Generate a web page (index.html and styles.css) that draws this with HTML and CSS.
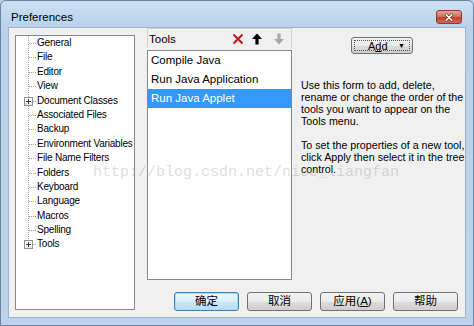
FILE: index.html
```html
<!DOCTYPE html>
<html lang="en">
<head>
  <meta charset="UTF-8">
  <title>Preferences</title>
  <link rel="stylesheet" href="styles.css">
</head>
<body>
  <div class="window">
    <div class="titlebar">
      <span class="title">Preferences</span>
      <span class="close">
        <svg width="26" height="13" viewBox="0 0 26 13">
          <path d="M10 3.5 L16 9.5 M16 3.5 L10 9.5" stroke="#7a2a20" stroke-width="3.2" stroke-linecap="round"/>
          <path d="M10 3.5 L16 9.5 M16 3.5 L10 9.5" stroke="#ffffff" stroke-width="1.8" stroke-linecap="round"/>
        </svg>
      </span>
    </div>

    <div class="client">
      <div class="tree">
        <ul class="tree-list">
          <li>General</li>
          <li>File</li>
          <li>Editor</li>
          <li>View</li>
          <li><span class="exp"></span>Document Classes</li>
          <li>Associated Files</li>
          <li>Backup</li>
          <li>Environment Variables</li>
          <li>File Name Filters</li>
          <li>Folders</li>
          <li>Keyboard</li>
          <li>Language</li>
          <li>Macros</li>
          <li>Spelling</li>
          <li><span class="exp"></span>Tools</li>
        </ul>
      </div>

      <div class="main">
        <div class="top">
          <div class="tools-panel">
            <div class="tools-head">
              <span>Tools</span>
              <svg class="ico ico-del" width="12" height="12" viewBox="0 0 12 12">
                <path d="M1.5 1.5 L10.5 10.5 M10.5 1.5 L1.5 10.5" stroke="#c0181c" stroke-width="2"/>
              </svg>
              <svg class="ico ico-up" width="12" height="12" viewBox="0 0 12 12">
                <path d="M6 0.5 L11 6 L7.6 6 L7.6 11.5 L4.4 11.5 L4.4 6 L1 6 Z" fill="#000"/>
              </svg>
              <svg class="ico ico-down" width="12" height="12" viewBox="0 0 12 12">
                <path d="M6 11.5 L11 6 L7.6 6 L7.6 0.5 L4.4 0.5 L4.4 6 L1 6 Z" fill="#a9a9a9"/>
              </svg>
            </div>
            <ul class="tools-list">
              <li>Compile Java</li>
              <li>Run Java Application</li>
              <li class="selected">Run Java Applet</li>
            </ul>
          </div>

          <div class="info">
            <button class="add-btn"><span class="focus"><span>A<u>d</u>d</span><span class="caret">&#9660;</span></span></button>
            <p>Use this form to add, delete,<br>rename or change the order of the<br>tools you want to appear on the<br>Tools menu.</p>
            <p>To set the properties of a new tool,<br>click Apply then select it in the tree<br>control.</p>
          </div>
        </div>

        <div class="buttons">
          <button class="btn default">确定</button>
          <button class="btn">取消</button>
          <button class="btn">应用(<u>A</u>)</button>
          <button class="btn">帮助</button>
        </div>
      </div>

      <div class="watermark">http://blog.csdn.net/nice_liangfan</div>
    </div>
  </div>
</body>
</html>
```

FILE: styles.css
```css
* {
  box-sizing: border-box;
}

body {
  margin: 0;
  font-family: "Liberation Sans", Arial, sans-serif;
  color: #000;
  background: #bcd2ea;
}

.window {
  width: 474px;
  height: 326px;
  display: flex;
  flex-direction: column;
  border: 1px solid #6b84a0;
  border-radius: 6px 6px 0 0;
  background: linear-gradient(#cde0f4, #b9d1ea 26px, #bcd3eb 100%);
}

.titlebar {
  height: 26px;
  display: flex;
  align-items: flex-start;
}

.title {
  margin: 8px 0 0 10px;
  font-size: 11.5px;
  line-height: 16px;
  color: #000;
}

.close {
  margin: 9px 11px 0 auto;
  width: 26px;
  height: 14px;
  display: flex;
  align-items: center;
  justify-content: center;
  border: 1px solid #8e3a30;
  border-radius: 3px;
  background: linear-gradient(#e8a596, #d2705f 45%, #c0402d 55%, #cf6a52);
}

.client {
  position: relative;
  margin: 0 7px;
  height: 291px;
  display: flex;
  align-items: flex-start;
  background: #f0f0f0;
  border: 1px solid #9fb4cb;
}

/* tree */
.tree {
  margin: 7px 0 0 6px;
  width: 120px;
  height: 275px;
  background: #fff;
  border: 1px solid #828790;
}

.tree-list {
  position: relative;
  list-style: none;
  margin: 0;
  padding: 0;
  font-size: 10px;
  letter-spacing: -0.2px;
}

.tree-list::before {
  content: "";
  position: absolute;
  left: 12px;
  top: 0;
  bottom: 7px;
  border-left: 1px dotted #a0a0a0;
}

.tree-list li {
  position: relative;
  height: 14.4px;
  line-height: 14.4px;
  padding-left: 21px;
  white-space: nowrap;
}

.tree-list li::before {
  content: "";
  position: absolute;
  left: 13px;
  top: 7px;
  width: 7px;
  border-top: 1px dotted #a0a0a0;
}

.exp {
  position: absolute;
  left: 8px;
  top: 3px;
  width: 9px;
  height: 9px;
  z-index: 1;
  border: 1px solid #939393;
  background: linear-gradient(#ffffff, #e6e6e6);
}

.exp::before,
.exp::after {
  content: "";
  position: absolute;
  background: #3a3a3a;
}

.exp::before {
  left: 1px;
  top: 3px;
  width: 5px;
  height: 1px;
}

.exp::after {
  left: 3px;
  top: 1px;
  width: 1px;
  height: 5px;
}

/* right side */
.main {
  margin-left: 12px;
  flex: 1;
  display: flex;
  flex-direction: column;
}

.top {
  height: 252px;
  display: flex;
}

.tools-panel {
  width: 145px;
  display: flex;
  flex-direction: column;
}

.tools-head {
  height: 20px;
  display: flex;
  align-items: center;
  padding-left: 1px;
  border: 1px solid #d2d2d2;
  border-bottom: none;
  font-size: 11.5px;
}

.ico-del {
  margin-left: 56px;
}

.ico-up {
  margin-left: 7px;
}

.ico-down {
  margin-left: 10px;
}

.tools-list {
  list-style: none;
  margin: 2px 0 0;
  padding: 0;
  flex: 1;
  background: #fff;
  border: 1px solid #828790;
  font-size: 11.5px;
}

.tools-list li {
  height: 19px;
  line-height: 19px;
  padding-left: 3px;
  white-space: nowrap;
}

.tools-list li.selected {
  background: #3399ff;
  color: #fff;
}

.info {
  flex: 1;
  padding-left: 9px;
  font-size: 10.7px;
  line-height: 12px;
  white-space: nowrap;
}

.add-btn {
  margin: 9px 0 25px 50px;
  width: 62px;
  height: 17px;
  padding: 2px;
  display: block;
  border: 1px solid #707070;
  border-radius: 3px;
  background: linear-gradient(#f2f2f2, #ebebeb 50%, #dddddd 50%, #cfcfcf);
  font-family: "Liberation Sans", Arial, sans-serif;
  font-size: 11px;
  color: #000;
}

.add-btn .focus {
  height: 100%;
  display: flex;
  align-items: center;
  padding: 0 4px 0 13px;
  border: 1px dotted #555;
}

.caret {
  margin-left: auto;
  font-size: 7px;
}

.info p {
  margin: 0 0 12px;
}

.buttons {
  margin-top: 12px;
  padding-right: 7px;
  display: flex;
  justify-content: flex-end;
  gap: 8px;
}

.btn {
  width: 65px;
  height: 19px;
  padding: 0;
  border: 1px solid #707070;
  border-radius: 3px;
  background: linear-gradient(#f2f2f2, #ebebeb 50%, #dddddd 50%, #cfcfcf);
  font-family: "Liberation Sans", "Noto Sans CJK SC", sans-serif;
  font-size: 11.5px;
  line-height: 17px;
  color: #000;
}

.btn.default {
  border-color: #3c7fb1;
  box-shadow: inset 0 0 0 1px #a8dcf8;
  background: linear-gradient(#eaf6fd, #d9f0fc 50%, #c9e7f8 50%, #b8dcf2);
}

.watermark {
  position: absolute;
  left: 84px;
  top: 137px;
  font-family: "Liberation Mono", "Courier New", monospace;
  font-size: 15px;
  line-height: 16px;
  color: rgba(140, 140, 140, 0.3);
  white-space: nowrap;
  pointer-events: none;
}
```
